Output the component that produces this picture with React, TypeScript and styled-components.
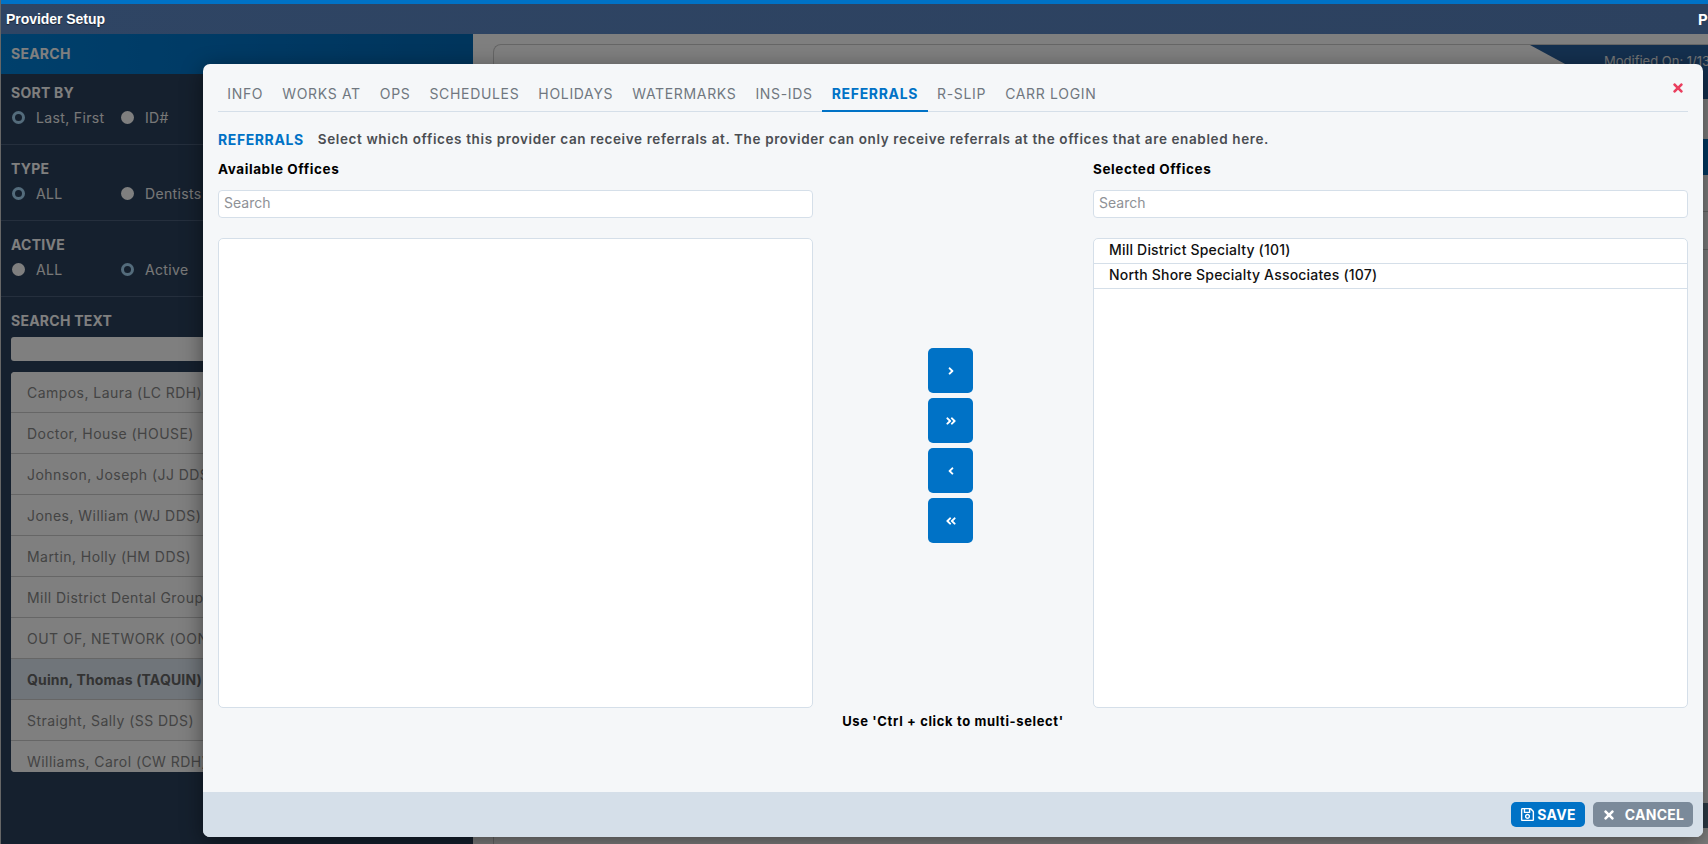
import React from "react";
import styled, { createGlobalStyle } from "styled-components";
import { FaAngleDoubleLeft, FaAngleDoubleRight, FaAngleLeft, FaAngleRight, FaRegSave, FaTimes } from "react-icons/fa";

const Global = createGlobalStyle`
  html, body { margin: 0; padding: 0; height: 100%; overflow: hidden; }
  #root { height: 100%; }
  * { box-sizing: border-box; }
  body { font-family: Inter, "Open Sans", sans-serif; font-size: 14px; }
`;

const Page = styled.div`
  position: relative;
  width: 1708px;
  height: 844px;
  overflow: hidden;
  display: flex;
  flex-direction: column;
  background: #fff;
  border-left: 1px solid #666;
`;
const TopStrip = styled.div`
  height: 4px;
  margin-left: -1px;
  background: #0072c6;
  position: relative;
  z-index: 3;
`;
const Header = styled.header`
  position: relative;
  z-index: 3;
  height: 30px;
  flex: none;
  display: flex;
  align-items: center;
  justify-content: space-between;
  padding: 0 0 0 5px;
  background: linear-gradient(90deg, #2f4564, #2c415f);
  color: #fff;
`;
const AppTitle = styled.div`
  font-family: "Liberation Sans", Arial, sans-serif;
  font-weight: 700;
  font-size: 14px;
  letter-spacing: -0.05px;
  text-shadow: 0 1px 1px rgba(0, 0, 0, 0.5);
`;
const HeaderRight = styled.div`
  width: 10px;
  overflow: hidden;
  font-weight: 700;
  font-size: 15px;
`;
const Main = styled.div`
  flex: 1;
  min-height: 0;
  display: flex;
`;
const Sidebar = styled.aside`
  width: 472px;
  flex: none;
  background: #2a405c;
  color: #fff;
  display: flex;
  flex-direction: column;
`;
const SideHead = styled.div`
  height: 40px;
  display: flex;
  align-items: center;
  padding: 0 0 2px 10px;
  background: linear-gradient(90deg, #0080d8, #0072c6 60%, #006ab8);
  font-weight: 700;
  font-size: 14px;
  letter-spacing: 0.25px;
`;
const Section = styled.section<{ $first?: boolean }>`
  padding: ${(p) => (p.$first ? "9px" : "14px")} 10px 17px;
  border-bottom: 1px solid #4a5f7a;
`;
const SectionTitle = styled.div`
  height: 20px;
  line-height: 20px;
  font-weight: 700;
  font-size: 14px;
  letter-spacing: 0.25px;
`;
const RadioRow = styled.div`
  margin-top: 4px;
  height: 20px;
  display: flex;
  align-items: center;
`;
const RadioOption = styled.label`
  width: 109px;
  padding-left: 1px;
  display: flex;
  align-items: center;
  gap: 11px;
  font-size: 14px;
  color: #f0f0f0;
  letter-spacing: 0.35px;
`;
const RadioDot = styled.span<{ $on?: boolean }>`
  width: 13px;
  height: 13px;
  border-radius: 50%;
  flex: none;
  background: ${(p) => (p.$on ? "#2a405c" : "#fff")};
  border: ${(p) => (p.$on ? "3.5px solid #a8d8f8" : "none")};
`;
const SearchSection = styled.section`
  padding: 14px 10px 0;
`;
const SideInput = styled.div`
  margin-top: 6px;
  height: 24px;
  background: #fff;
  border-radius: 3px;
`;
const ProviderList = styled.ul`
  list-style: none;
  margin: 11px 10px 0;
  padding: 0;
  height: 400px;
  overflow: hidden;
  background: #fff;
  border-radius: 4px;
`;
const ProviderRow = styled.li<{ $sel?: boolean }>`
  height: 41px;
  display: flex;
  align-items: center;
  padding-left: 16px;
  border-bottom: 1px solid #ccc;
  white-space: nowrap;
  font-size: 14px;
  letter-spacing: ${(p) => (p.$sel ? "0.15px" : "0.45px")};
  color: ${(p) => (p.$sel ? "#666" : "#888")};
  background: ${(p) => (p.$sel ? "#e0eaf5" : "#fff")};
  font-weight: ${(p) => (p.$sel ? 700 : 400)};
`;
const Content = styled.main`
  flex: 1;
  min-width: 0;
  padding: 10px 0 0 20px;
  display: flex;
  flex-direction: column;
`;
const Panel = styled.div`
  position: relative;
  flex: 1;
  display: flex;
  flex-direction: column;
  border-top: 1px solid #ccc;
  border-left: 1px solid #ccc;
  border-top-left-radius: 8px;
`;
const Wedge = styled.div`
  position: absolute;
  top: 0;
  right: 0;
  width: 178px;
  height: 54px;
  padding: 7px 0 0 74px;
  background: #28609e;
  clip-path: polygon(0 0, 100% 0, 100% 100%, 56% 100%);
  color: #ececec;
  font-size: 13px;
  line-height: 18px;
  white-space: nowrap;
  overflow: hidden;
`;
const BlueBand = styled.div`
  margin-top: 94px;
  height: 36px;
  background: #0072c6;
`;
const PanelRow = styled.div<{ $h: number }>`
  height: ${(p) => p.$h}px;
  border-bottom: 1px solid #ccc;
`;
const PanelFooter = styled.div`
  margin-top: auto;
  margin-bottom: 16px;
  height: 25px;
  background: #5a7690;
`;

const Backdrop = styled.div`
  position: absolute;
  inset: 34px 0 0 -1px;
  background: rgba(0, 0, 0, 0.5);
  z-index: 1;
`;
const Modal = styled.div`
  position: absolute;
  left: 202px;
  top: 64px;
  width: 1500px;
  height: 773px;
  z-index: 2;
  display: flex;
  flex-direction: column;
  background: #f5f7f9;
  border-radius: 7px;
  overflow: hidden;
  box-shadow: 0 5px 22px rgba(0, 0, 0, 0.45);
`;
const CloseButton = styled.button`
  position: absolute;
  top: 17px;
  right: 18px;
  width: 14px;
  height: 14px;
  padding: 0;
  border: 0;
  background: none;
  color: #ea3f5f;
  display: flex;
  align-items: center;
  justify-content: center;
  font-size: 14px;
`;
const ModalBody = styled.div`
  flex: 1;
  padding: 0 15px;
  min-height: 0;
  display: flex;
  flex-direction: column;
`;
const Tabs = styled.nav`
  height: 48px;
  flex: none;
  display: flex;
  align-items: flex-end;
  margin-left: 0;
  border-bottom: 1px solid #d5dfe9;
`;
const Tab = styled.div<{ $active?: boolean }>`
  height: 35px;
  margin-bottom: -1px;
  padding: 0 9.75px 0 9.25px;
  display: flex;
  align-items: center;
  white-space: nowrap;
  font-size: 14px;
  letter-spacing: 0.67px;
  color: ${(p) => (p.$active ? "#0072c6" : "#707780")};
  font-weight: ${(p) => (p.$active ? 700 : 400)};
  border-bottom: 2px solid ${(p) => (p.$active ? "#0072c6" : "transparent")};
`;
const Intro = styled.div`
  margin-top: 17px;
  height: 20px;
  display: flex;
  align-items: center;
  gap: 14px;
  white-space: nowrap;
`;
const IntroLabel = styled.span`
  color: #0072c6;
  font-weight: 700;
  font-size: 14px;
  letter-spacing: 0.6px;
`;
const IntroText = styled.span`
  color: #4a4d52;
  font-weight: 600;
  font-size: 13.5px;
  letter-spacing: 0.62px;
`;
const Columns = styled.div`
  margin-top: 10px;
  flex: none;
  height: 549px;
  display: grid;
  grid-template-columns: 595px 1fr 595px;
`;
const Column = styled.div`
  display: flex;
  flex-direction: column;
`;
const ColumnTitle = styled.div`
  height: 20px;
  line-height: 20px;
  font-weight: 700;
  font-size: 13.5px;
  letter-spacing: 0.58px;
  color: #000;
`;
const SearchInput = styled.input`
  margin-top: 11px;
  height: 28px;
  padding: 0 5px 3px;
  border: 1px solid #d5dfe9;
  border-radius: 4px;
  background: #fff;
  font-family: inherit;
  font-size: 14px;
  outline: none;
  &::placeholder { color: #8e9196; opacity: 1; }
`;
const OfficeList = styled.ul`
  list-style: none;
  margin: 20px 0 0;
  padding: 0;
  flex: 1;
  border: 1px solid #d5dfe9;
  border-radius: 5px;
  background: #fff;
  overflow: hidden;
`;
const OfficeRow = styled.li`
  height: 25px;
  display: flex;
  align-items: center;
  padding: 0 0 3px 15px;
  border-bottom: 1px solid #d5dfe9;
  color: #111;
  font-size: 14px;
  font-weight: 500;
  letter-spacing: 0.2px;
`;
const MoveButtons = styled.div`
  padding: 24px 5px 0 0;
  display: flex;
  flex-direction: column;
  align-items: center;
  justify-content: center;
  gap: 5px;
`;
const MoveButton = styled.button`
  width: 45px;
  height: 45px;
  padding: 0;
  border: 0;
  border-radius: 5px;
  background: #0072c6;
  color: #fff;
  display: flex;
  align-items: center;
  justify-content: center;
  font-size: 12px;
`;
const Hint = styled.div`
  margin-top: 3px;
  height: 20px;
  line-height: 20px;
  text-align: center;
  font-weight: 700;
  font-size: 13px;
  letter-spacing: 0.63px;
  color: #000;
`;
const Footer = styled.footer`
  height: 45px;
  flex: none;
  display: flex;
  align-items: center;
  justify-content: flex-end;
  gap: 8px;
  padding-right: 10px;
  background: #d5dfe9;
`;
const ActionButton = styled.button<{ $kind: "save" | "cancel" }>`
  width: ${(p) => (p.$kind === "save" ? "74px" : "100px")};
  height: 25px;
  padding: 0;
  border: 0;
  border-radius: 5px;
  background: ${(p) => (p.$kind === "save" ? "#0072c6" : "#7b8a9a")};
  color: #fff;
  display: flex;
  align-items: center;
  justify-content: center;
  gap: ${(p) => (p.$kind === "save" ? "2px" : "9px")};
  font-family: inherit;
  font-weight: 700;
  font-size: 14px;
  letter-spacing: 0.3px;
  & svg { font-size: ${(p) => (p.$kind === "save" ? "15px" : "14px")}; }
`;

const tabs = ["INFO", "WORKS AT", "OPS", "SCHEDULES", "HOLIDAYS", "WATERMARKS", "INS-IDS", "REFERRALS", "R-SLIP", "CARR LOGIN"];
const providers = [
  "Campos, Laura (LC RDH)",
  "Doctor, House (HOUSE)",
  "Johnson, Joseph (JJ DDS)",
  "Jones, William (WJ DDS)",
  "Martin, Holly (HM DDS)",
  "Mill District Dental Group",
  "OUT OF, NETWORK (OON)",
  "Quinn, Thomas (TAQUIN)",
  "Straight, Sally (SS DDS)",
  "Williams, Carol (CW RDH)",
];

const Radio = ({ label, on }: { label: string; on?: boolean }) => (
  <RadioOption>
    <RadioDot $on={on} />
    {label}
  </RadioOption>
);

export default function App() {
  return (
    <Page>
      <Global />
      <TopStrip />
      <Header>
        <AppTitle>Provider Setup</AppTitle>
        <HeaderRight>P</HeaderRight>
      </Header>
      <Main>
        <Sidebar>
          <SideHead>SEARCH</SideHead>
          <Section $first>
            <SectionTitle>SORT BY</SectionTitle>
            <RadioRow>
              <Radio label="Last, First" on />
              <Radio label="ID#" />
            </RadioRow>
          </Section>
          <Section>
            <SectionTitle>TYPE</SectionTitle>
            <RadioRow>
              <Radio label="ALL" on />
              <Radio label="Dentists" />
            </RadioRow>
          </Section>
          <Section>
            <SectionTitle>ACTIVE</SectionTitle>
            <RadioRow>
              <Radio label="ALL" />
              <Radio label="Active" on />
            </RadioRow>
          </Section>
          <SearchSection>
            <SectionTitle>SEARCH TEXT</SectionTitle>
            <SideInput />
          </SearchSection>
          <ProviderList>
            {providers.map((p) => (
              <ProviderRow key={p} $sel={p.startsWith("Quinn")}>
                {p}
              </ProviderRow>
            ))}
          </ProviderList>
        </Sidebar>
        <Content>
          <Panel>
            <Wedge>
              Modified On: 1/13
            </Wedge>
            <BlueBand />
            <PanelRow $h={37} />
            <PanelRow $h={38} />
            <PanelFooter />
          </Panel>
        </Content>
      </Main>
      <Backdrop />
      <Modal>
        <CloseButton aria-label="Close">
          <FaTimes />
        </CloseButton>
        <ModalBody>
          <Tabs>
            {tabs.map((t) => (
              <Tab key={t} $active={t === "REFERRALS"}>
                {t}
              </Tab>
            ))}
          </Tabs>
          <Intro>
            <IntroLabel>REFERRALS</IntroLabel>
            <IntroText>
              Select which offices this provider can receive referrals at. The provider can only receive referrals at the offices that are enabled here.
            </IntroText>
          </Intro>
          <Columns>
            <Column>
              <ColumnTitle>Available Offices</ColumnTitle>
              <SearchInput placeholder="Search" />
              <OfficeList />
            </Column>
            <MoveButtons>
              <MoveButton aria-label="Add"><FaAngleRight /></MoveButton>
              <MoveButton aria-label="Add all"><FaAngleDoubleRight /></MoveButton>
              <MoveButton aria-label="Remove"><FaAngleLeft /></MoveButton>
              <MoveButton aria-label="Remove all"><FaAngleDoubleLeft /></MoveButton>
            </MoveButtons>
            <Column>
              <ColumnTitle>Selected Offices</ColumnTitle>
              <SearchInput placeholder="Search" />
              <OfficeList>
                <OfficeRow>Mill District Specialty (101)</OfficeRow>
                <OfficeRow>North Shore Specialty Associates (107)</OfficeRow>
              </OfficeList>
            </Column>
          </Columns>
          <Hint>Use 'Ctrl + click to multi-select'</Hint>
        </ModalBody>
        <Footer>
          <ActionButton $kind="save"><FaRegSave />SAVE</ActionButton>
          <ActionButton $kind="cancel"><FaTimes />CANCEL</ActionButton>
        </Footer>
      </Modal>
    </Page>
  );
}
